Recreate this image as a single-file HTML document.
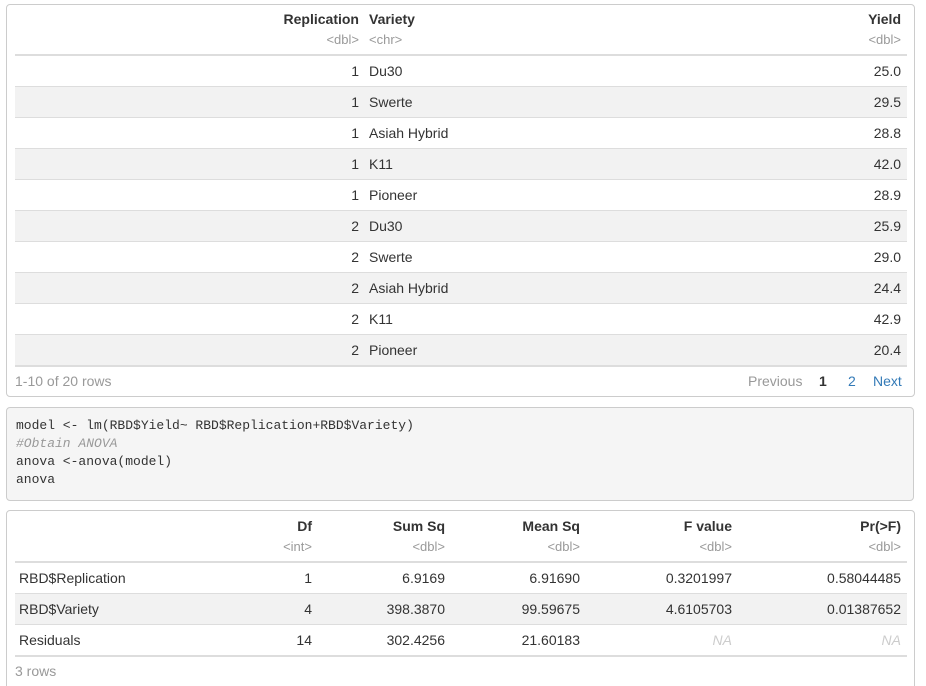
<!DOCTYPE html>
<html><head><style>
html,body{margin:0;background:#fff;font-family:"Liberation Sans",Arial,sans-serif;font-size:14px;color:#333;width:926px;height:686px;overflow:hidden;position:relative}
.panel{position:absolute;left:6px;width:907px;border:1px solid #ccc;border-radius:4px;background:#fff}
.t{position:absolute;white-space:nowrap}
.r{text-align:right}
.b{font-weight:bold}
.g{color:#999;font-size:13px}
.row{position:absolute;left:9px;width:892px;height:31px;border-top:1px solid #ddd}
.s{background:#f2f2f2}
.hb{position:absolute;left:9px;width:892px;height:2px;background:#ddd}
pre{position:absolute;left:6px;top:407px;width:888px;height:76px;margin:0;padding:9px 9px 7px 9px;background:#f5f5f5;border:1px solid #ccc;border-radius:4px;font-family:"Liberation Mono",monospace;font-size:13px;line-height:18px;color:#333}
</style></head><body>
<div class="panel" style="top:4px;height:391px"></div>
<div class="t b" style="right:567px;top:11px">Replication</div>
<div class="t b" style="left:369px;top:11px">Variety</div>
<div class="t b" style="right:25px;top:11px">Yield</div>
<div class="t g" style="right:567px;top:32px">&lt;dbl&gt;</div>
<div class="t g" style="left:369px;top:32px">&lt;chr&gt;</div>
<div class="t g" style="right:25px;top:32px">&lt;dbl&gt;</div>
<div class="hb" style="left:15px;top:54px"></div>
<div id="rows1"></div>
<div class="hb" style="left:15px;top:365px"></div>
<div class="t" style="left:15px;top:373px;color:#999">1-10 of 20 rows</div>
<div class="t" style="left:748px;top:373px;color:#999">Previous</div>
<div class="t b" style="left:819px;top:373px;color:#333">1</div>
<div class="t" style="left:848px;top:373px;color:#337ab7">2</div>
<div class="t" style="left:873px;top:373px;color:#337ab7">Next</div>
<pre>model &lt;- lm(RBD$Yield~ RBD$Replication+RBD$Variety)
<i style="color:#999">#Obtain ANOVA</i>
anova &lt;-anova(model)
anova</pre>
<div class="panel" style="top:510px;height:190px"></div>
<div class="t b" style="right:614px;top:518px">Df</div>
<div class="t b" style="right:481px;top:518px">Sum Sq</div>
<div class="t b" style="right:346px;top:518px">Mean Sq</div>
<div class="t b" style="right:194px;top:518px">F value</div>
<div class="t b" style="right:25px;top:518px">Pr(&gt;F)</div>
<div class="t g" style="right:614px;top:539px">&lt;int&gt;</div>
<div class="t g" style="right:481px;top:539px">&lt;dbl&gt;</div>
<div class="t g" style="right:346px;top:539px">&lt;dbl&gt;</div>
<div class="t g" style="right:194px;top:539px">&lt;dbl&gt;</div>
<div class="t g" style="right:25px;top:539px">&lt;dbl&gt;</div>
<div class="hb" style="left:15px;top:561px"></div>
<div class="row" style="left:15px;top:563px;border:0"></div>
<div class="row s" style="left:15px;top:593px"></div>
<div class="row" style="left:15px;top:624px"></div>
<div class="hb" style="left:15px;top:655px"></div>
<div class="t" style="left:19px;top:570px">RBD$Replication</div>
<div class="t r" style="right:614px;top:570px">1</div>
<div class="t r" style="right:481px;top:570px">6.9169</div>
<div class="t r" style="right:346px;top:570px">6.91690</div>
<div class="t r" style="right:194px;top:570px">0.3201997</div>
<div class="t r" style="right:25px;top:570px">0.58044485</div>
<div class="t" style="left:19px;top:601px">RBD$Variety</div>
<div class="t r" style="right:614px;top:601px">4</div>
<div class="t r" style="right:481px;top:601px">398.3870</div>
<div class="t r" style="right:346px;top:601px">99.59675</div>
<div class="t r" style="right:194px;top:601px">4.6105703</div>
<div class="t r" style="right:25px;top:601px">0.01387652</div>
<div class="t" style="left:19px;top:632px">Residuals</div>
<div class="t r" style="right:614px;top:632px">14</div>
<div class="t r" style="right:481px;top:632px">302.4256</div>
<div class="t r" style="right:346px;top:632px">21.60183</div>
<div class="t r" style="right:194px;top:632px;color:#ccc;font-style:italic">NA</div>
<div class="t r" style="right:25px;top:632px;color:#ccc;font-style:italic">NA</div>
<div class="t" style="left:15px;top:663px;color:#999">3 rows</div>
<script>
var d=[["Du30","25.0"],["Swerte","29.5"],["Asiah Hybrid","28.8"],["K11","42.0"],["Pioneer","28.9"],["Du30","25.9"],["Swerte","29.0"],["Asiah Hybrid","24.4"],["K11","42.9"],["Pioneer","20.4"]];
var h="";
for(var i=0;i<10;i++){var y=56+i*31;
h+='<div class="row'+(i%2?' s':'')+'" style="left:15px;top:'+(y-1)+'px;'+(i==0?'border:0;':'')+'"></div>';
h+='<div class="t" style="right:567px;top:'+(y+7)+'px">'+(i<5?1:2)+'</div>';
h+='<div class="t" style="left:369px;top:'+(y+7)+'px">'+d[i][0]+'</div>';
h+='<div class="t" style="right:25px;top:'+(y+7)+'px">'+d[i][1]+'</div>';}
document.getElementById("rows1").innerHTML=h;
</script>
</body></html>
